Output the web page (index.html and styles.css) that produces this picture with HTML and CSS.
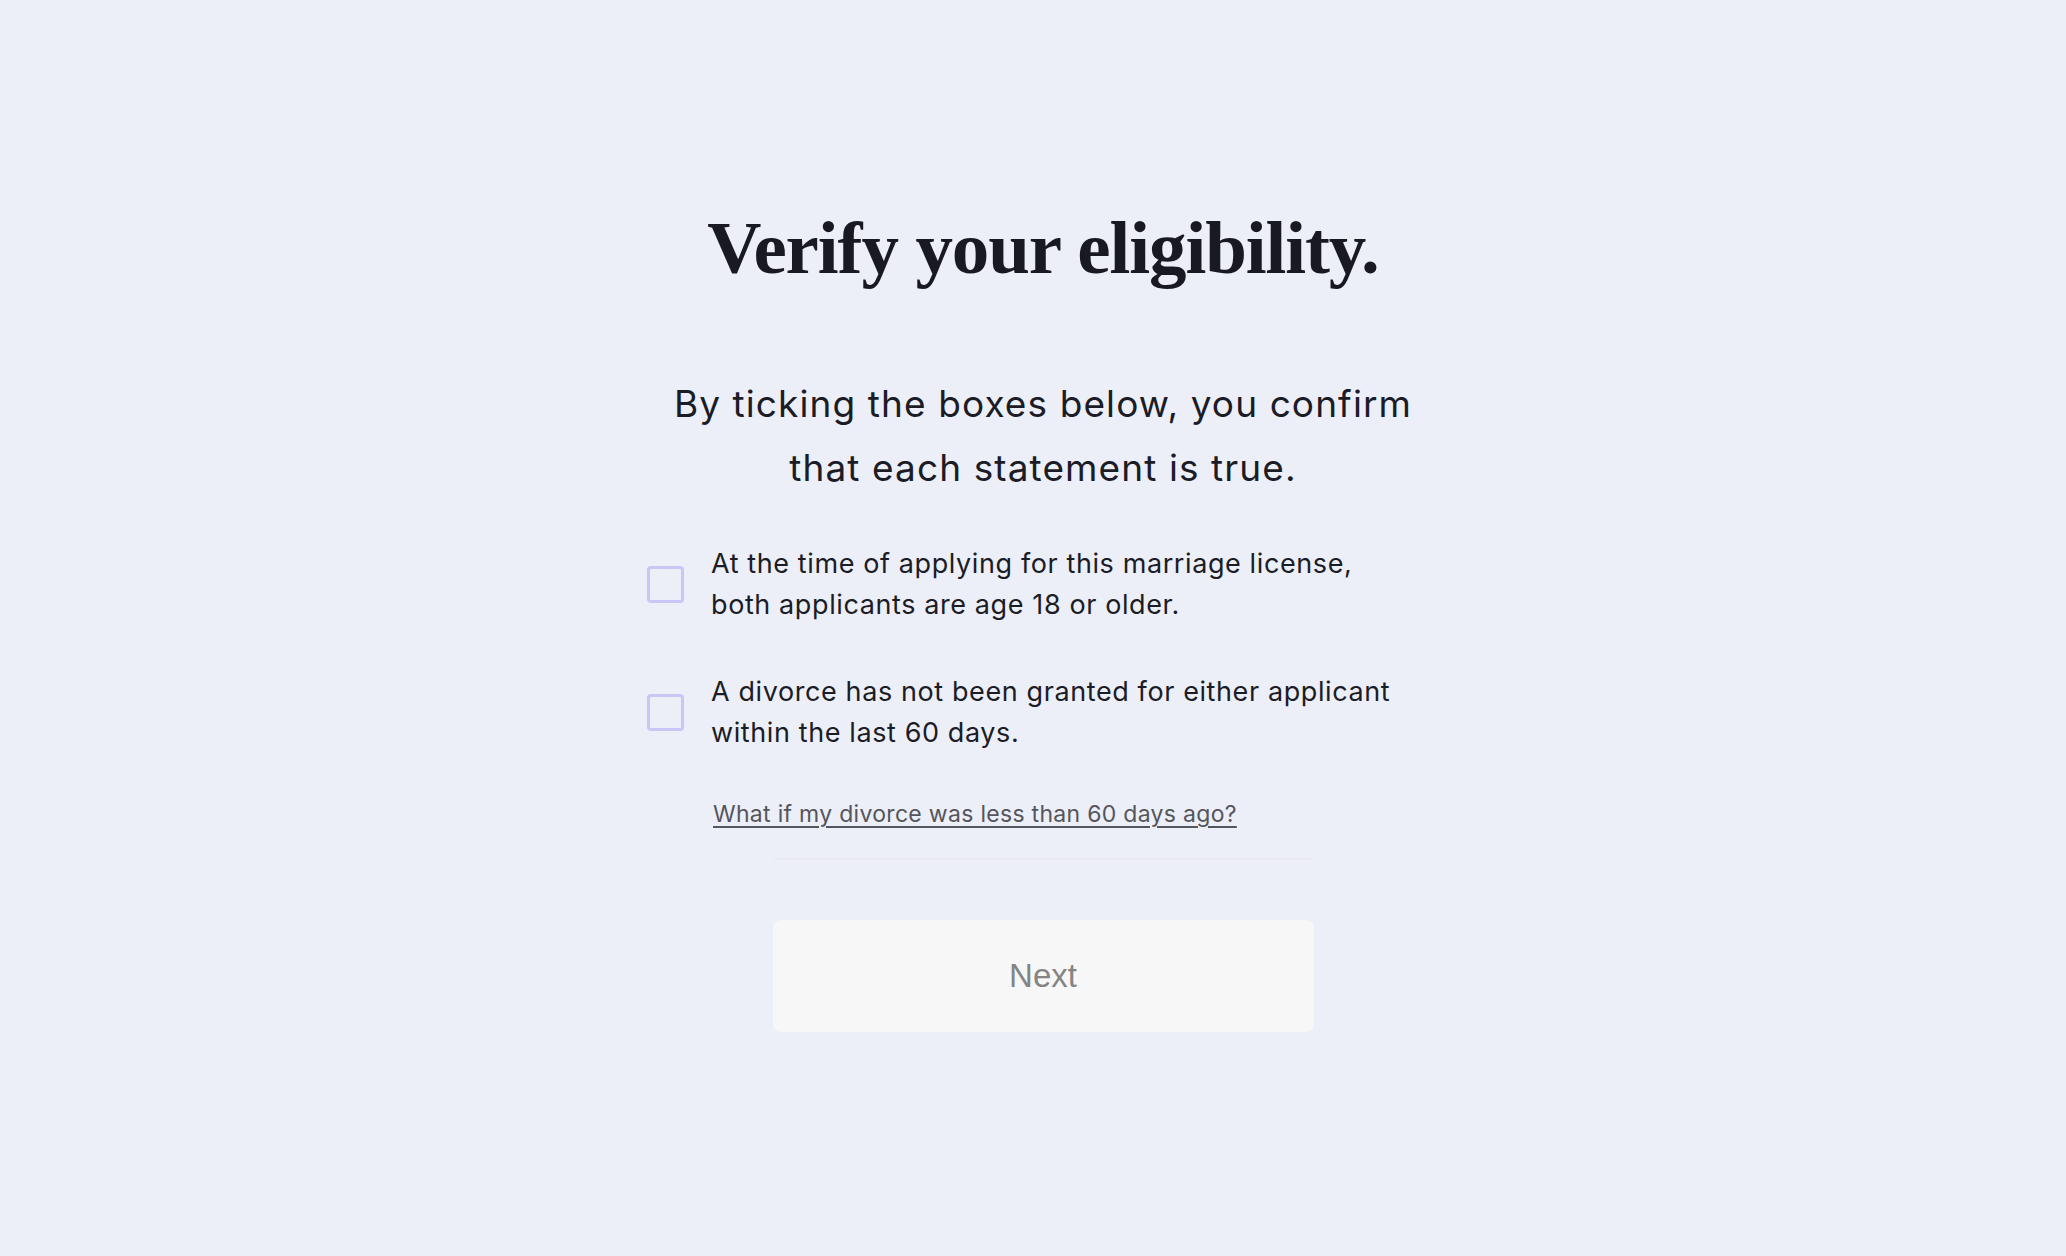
FILE: index.html
```html
<!DOCTYPE html>
<html lang="en">
<head>
<meta charset="utf-8">
<title>Verify your eligibility</title>
<link rel="stylesheet" href="styles.css">
</head>
<body>
<main class="page">
  <section class="form">
    <h1 class="title">Verify your eligibility.</h1>
    <p class="intro">By ticking the boxes below, you confirm<br>that each statement is true.</p>
    <ul class="checklist">
      <li class="item">
        <span class="box" role="checkbox" aria-checked="false"></span>
        <span class="item-text">At the time of applying for this marriage license, both applicants are age 18 or older.</span>
      </li>
      <li class="item item-second">
        <span class="box" role="checkbox" aria-checked="false"></span>
        <span class="item-text">A divorce has not been granted for either applicant within the last 60 days.</span>
      </li>
    </ul>
    <a class="help-link" href="#">What if my divorce was less than 60 days ago?</a>
    <hr class="divider">
    <button class="next" type="button" disabled>Next</button>
  </section>
</main>
</body>
</html>
```

FILE: styles.css
```css
html, body {
  margin: 0;
  padding: 0;
  background: #eceff8;
}

body {
  min-height: 1256px;
  font-family: Inter, "Noto Sans", sans-serif;
  color: #1b1c26;
}

.page {
  display: flex;
  justify-content: center;
  padding-left: 20px;
  padding-top: 203px;
}

.form {
  width: 792px;
  display: flex;
  flex-direction: column;
  align-items: center;
}

.title {
  margin: 0;
  font-family: "Liberation Serif", "Times New Roman", serif;
  font-weight: 700;
  font-size: 75px;
  line-height: 90px;
  letter-spacing: -1.1px;
  color: #181922;
  text-align: center;
}

.intro {
  margin: 79px 0 0;
  font-size: 37px;
  line-height: 64px;
  font-weight: 400;
  letter-spacing: 1.1px;
  text-align: center;
  color: #1b1c26;
}

.checklist {
  list-style: none;
  margin: 43px 0 0;
  padding: 0;
  width: 792px;
  display: flex;
  flex-direction: column;
  gap: 46px;
}

.item {
  display: flex;
  align-items: center;
  gap: 27px;
}

.box {
  flex: 0 0 auto;
  width: 37px;
  height: 37px;
  box-sizing: border-box;
  border: 3px solid #c9c7f5;
  border-radius: 4px;
}

.item-text {
  max-width: 690px;
  font-size: 27px;
  line-height: 41px;
  letter-spacing: 0.6px;
  color: #1b1c26;
}

.help-link {
  align-self: flex-start;
  margin: 45px 0 0 66px;
  font-size: 23px;
  line-height: 32px;
  letter-spacing: 0.3px;
  color: #55555c;
  text-decoration: underline;
  text-decoration-thickness: 2px;
  text-underline-offset: 4px;
}

.divider {
  width: 538px;
  height: 2px;
  margin: 28px 0 0;
  border: 0;
  background: #e9e9ee;
}

.next {
  margin-top: 60px;
  width: 541px;
  height: 112px;
  border: 0;
  border-radius: 8px;
  background: #f7f7f7;
  font-family: "Liberation Sans", Arial, sans-serif;
  font-size: 33px;
  color: #848484;
  cursor: default;
}
```
